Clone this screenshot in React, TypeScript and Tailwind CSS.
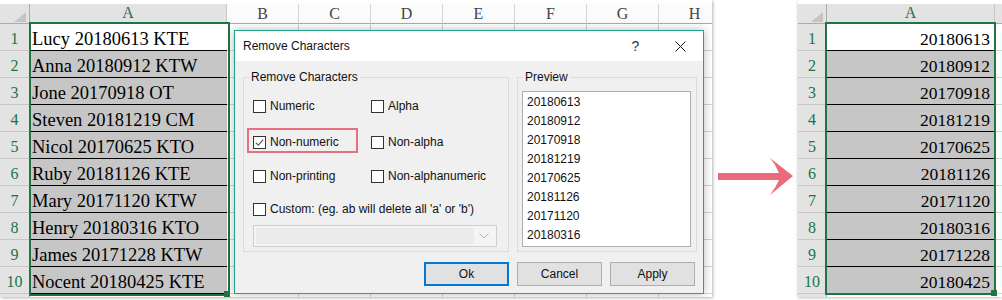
import React from "react";

const leftRows = [
  "Lucy 20180613 KTE",
  "Anna 20180912 KTW",
  "Jone 20170918 OT",
  "Steven 20181219 CM",
  "Nicol 20170625 KTO",
  "Ruby 20181126 KTE",
  "Mary 20171120 KTW",
  "Henry 20180316 KTO",
  "James 20171228 KTW",
  "Nocent 20180425 KTE",
];
const nums = [
  "20180613",
  "20180912",
  "20170918",
  "20181219",
  "20170625",
  "20181126",
  "20171120",
  "20180316",
  "20171228",
  "20180425",
];
const cols = ["B", "C", "D", "E", "F", "G", "H"];

function CornerTriangle() {
  return (
    <svg width="12" height="10" viewBox="0 0 12 10">
      <polygon points="12,0 12,10 0,10" fill="#c4c4c4" />
    </svg>
  );
}

function Box({ checked }: { checked?: boolean }) {
  return (
    <span className="w-[13px] h-[13px] border border-[#333333] bg-white flex items-center justify-center shrink-0">
      {checked && (
        <svg width="11" height="11" viewBox="0 0 11 11">
          <path d="M1.8 5.6 L4.3 8.1 L9.2 2.6" stroke="#5a5a5a" strokeWidth="1.2" fill="none" />
        </svg>
      )}
    </span>
  );
}

function Item({ label, checked }: { label: string; checked?: boolean }) {
  return (
    <div className="flex items-center gap-[4px] h-[24px] w-[118px] shrink-0 whitespace-nowrap">
      <Box checked={checked} />
      <span>{label}</span>
    </div>
  );
}

function Dialog() {
  return (
    <div className="absolute left-[234px] top-[30px] w-[470px] h-[264px] border border-[#1fa68a] bg-[#f0f0f0] shadow-[0_0_9px_rgba(0,0,0,0.28)] flex flex-col font-['Liberation_Sans',Arial,sans-serif] text-[12px] text-[#111111]">
      <div className="h-[30px] bg-white flex items-center shrink-0">
        <span className="pl-[8px] flex-1">Remove Characters</span>
        <div className="w-[45px] h-full flex items-center justify-center text-[14px] text-[#333333]">?</div>
        <div className="w-[45px] h-full flex items-center justify-center">
          <svg width="11" height="11" viewBox="0 0 11 11">
            <path d="M0.5 0.5 L10.5 10.5 M10.5 0.5 L0.5 10.5" stroke="#1a1a1a" strokeWidth="1" />
          </svg>
        </div>
      </div>
      <div className="flex-1 pt-[9px] pl-[8px] pr-[6px] flex flex-col">
        <div className="flex gap-[8px]">
          <fieldset className="w-[266px] border border-[#dcdcdc] pl-[9px] pr-[11px] pb-[4px]">
            <legend className="ml-[-4px] px-[2px] leading-[14px]">Remove Characters</legend>
            <div className="flex mt-[10px]">
              <Item label="Numeric" />
              <Item label="Alpha" />
            </div>
            <div className="flex mt-[12px]">
              <div className="relative">
                <Item label="Non-numeric" checked />
                <div className="absolute left-[-6px] top-[-2px] w-[111px] h-[25px] border-2 border-[#e7707e] pointer-events-none" />
              </div>
              <Item label="Non-alpha" />
            </div>
            <div className="flex mt-[10px]">
              <Item label="Non-printing" />
              <Item label="Non-alphanumeric" />
            </div>
            <div className="flex items-center gap-[4px] h-[24px] mt-[9px] whitespace-nowrap">
              <Box />
              <span>Custom: (eg. ab will delete all 'a' or 'b')</span>
            </div>
            <div className="mt-[4px] h-[22px] w-[244px] border border-[#cfcfcf] bg-[#f4f4f4] flex items-center p-[2px]">
              <div className="flex-1 h-full bg-[#ebebeb]" />
              <div className="w-[20px] flex justify-center">
                <svg width="10" height="6" viewBox="0 0 10 6">
                  <path d="M0.5 0.5 L5 5 L9.5 0.5" stroke="#b4b4b4" strokeWidth="1" fill="none" />
                </svg>
              </div>
            </div>
          </fieldset>
          <fieldset className="w-[180px] border border-[#dcdcdc] pl-[4px] pr-[5px] pb-[4px]">
            <legend className="ml-[1px] px-[2px] leading-[14px]">Preview</legend>
            <div className="mt-[7px] h-[156px] w-[169px] border border-[#adadad] bg-white pt-[1px] pl-[4px] overflow-hidden">
              {nums.slice(0, 8).map((n) => (
                <div key={n} className="leading-[19px]">
                  {n}
                </div>
              ))}
            </div>
          </fieldset>
        </div>
        <div className="mt-[10px] flex justify-end pr-[2px]">
          <div className="w-[85px] h-[24px] border-2 border-[#0078d7] bg-[#e1e1e1] flex items-center justify-center">Ok</div>
          <div className="ml-[8px] w-[85px] h-[24px] border border-[#adadad] bg-[#e1e1e1] flex items-center justify-center">Cancel</div>
          <div className="ml-[8px] w-[85px] h-[24px] border border-[#adadad] bg-[#e1e1e1] flex items-center justify-center">Apply</div>
        </div>
      </div>
    </div>
  );
}

function LeftSheet() {
  return (
    <div className="relative w-[712px] h-[297px] shrink-0 overflow-hidden bg-white shadow-[1px_1px_3px_rgba(0,0,0,0.3)] font-['Liberation_Serif','Times_New_Roman',serif]">
      <div className="h-[4px] bg-white" />
      <div className="flex h-[20px]">
        <div className="w-[30px] shrink-0 bg-[#e3e3e3] border-r border-b border-[#ababab] flex items-end justify-end pr-[3px] pb-[1px]">
          <CornerTriangle />
        </div>
        <div className="w-[197px] shrink-0 bg-[#e3e3e3] border-r border-[#c6c6c6] border-b-2 border-b-[#217346] flex items-center justify-center text-[16px] text-[#217346]">
          A
        </div>
        {cols.map((c) => (
          <div
            key={c}
            className="w-[72px] shrink-0 bg-[#fbfbfb] border-r border-[#d4d4d4] border-b border-b-[#ababab] flex items-center justify-center text-[16px] text-[#444444]"
          >
            {c}
          </div>
        ))}
      </div>
      {[...leftRows, ""].map((t, i) => (
        <div key={i} className="flex h-[27px]">
          <div className="w-[30px] shrink-0 bg-[#e3e3e3] border-r border-[#ababab] border-b border-b-[#c6c6c6] text-center text-[16px] text-[#217346] pt-[4px] leading-[22px]">
            {i < 10 ? i + 1 : ""}
          </div>
          <div
            className={`w-[197px] shrink-0 pl-[2px] text-[18.5px] text-black pt-[4px] leading-[22px] whitespace-nowrap overflow-hidden border-b ${
              i === 0 ? "bg-white border-b-black" : i < 10 ? "bg-[#c6c6c6] border-b-black" : "bg-white border-b-[#d4d4d4]"
            }`}
          >
            {t}
          </div>
          {cols.map((c) => (
            <div key={c} className="w-[72px] shrink-0 border-r border-b border-[#d4d4d4]" />
          ))}
        </div>
      ))}
      <div className="absolute left-[29px] top-[22px] w-[201px] h-[274px] border-2 border-[#217346] pointer-events-none" />
      <div className="absolute left-[224px] top-[291px] w-[6px] h-[6px] bg-[#217346] pointer-events-none" />
      <Dialog />
    </div>
  );
}

function RightSheet() {
  return (
    <div className="relative w-[204px] h-[297px] shrink-0 overflow-hidden bg-white shadow-[0_1px_3px_rgba(0,0,0,0.25)] font-['Liberation_Serif','Times_New_Roman',serif]">
      <div className="h-[4px] bg-white" />
      <div className="flex h-[20px]">
        <div className="w-[29px] shrink-0 bg-[#e3e3e3] border-r border-b border-[#ababab] flex items-end justify-end pr-[3px] pb-[1px]">
          <CornerTriangle />
        </div>
        <div className="w-[168px] shrink-0 bg-[#e3e3e3] border-r border-[#c6c6c6] border-b-2 border-b-[#217346] flex items-center justify-center text-[16px] text-[#217346]">
          A
        </div>
        <div className="w-[40px] shrink-0 bg-[#e3e3e3] border-b border-[#ababab]" />
      </div>
      {[...nums, ""].map((n, i) => (
        <div key={i} className="flex h-[27px]">
          <div className="w-[29px] shrink-0 bg-[#e3e3e3] border-r border-[#ababab] border-b border-b-[#c6c6c6] text-center text-[16px] text-[#217346] pt-[4px] leading-[22px]">
            {i < 10 ? i + 1 : ""}
          </div>
          <div
            className={`w-[168px] shrink-0 pr-[5px] text-right text-[17.5px] text-black pt-[4px] leading-[22px] whitespace-nowrap overflow-hidden border-b ${
              i === 0 ? "bg-white border-b-black" : i < 10 ? "bg-[#c6c6c6] border-b-black" : "bg-white border-b-[#d4d4d4]"
            }`}
          >
            {n}
          </div>
          <div className="w-[40px] shrink-0 border-l border-b border-[#d4d4d4]" />
        </div>
      ))}
      <div className="absolute left-[27px] top-[22px] w-[171px] h-[273px] border-2 border-[#217346] pointer-events-none" />
      <div className="absolute left-[193px] top-[290px] w-[6px] h-[6px] bg-[#217346] pointer-events-none" />
    </div>
  );
}

export default function App() {
  return (
    <div className="w-[1002px] h-[300px] bg-white flex items-start overflow-hidden">
      <LeftSheet />
      <div className="w-[86px] h-[297px] shrink-0">
        <svg width="86" height="297" viewBox="0 0 86 297">
          <path
            d="M6 173 L67 173 Q64 165 58 158 L81 176 L58 195 Q64 187 67 180 L6 180 Z"
            fill="#ec6b7a"
          />
        </svg>
      </div>
      <RightSheet />
    </div>
  );
}
